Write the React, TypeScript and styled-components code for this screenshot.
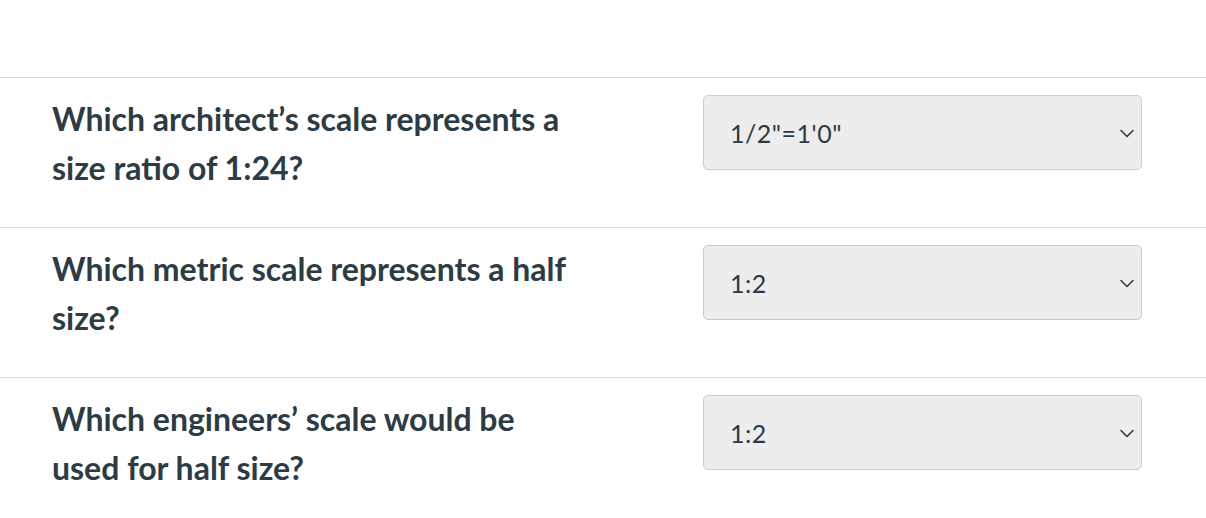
import React from 'react'
import styled, { createGlobalStyle } from 'styled-components'

const GlobalStyle = createGlobalStyle`
  html, body {
    margin: 0;
    padding: 0;
    background: #ffffff;
  }
  body {
    font-family: Lato, "Liberation Sans", sans-serif;
    color: #2d3b45;
  }
`

const Page = styled.div`
  width: 1206px;
  padding-top: 77px;
`

const Row = styled.div`
  display: grid;
  grid-template-columns: 1fr 439px;
  align-items: start;
  height: 150px;
  box-sizing: border-box;
  border-top: 1px solid #d9d9d9;
  padding: 0 64px 0 52px;
`

const Question = styled.div`
  max-width: 522px;
  margin-top: 16px;
  font-size: 32px;
  font-weight: 700;
  line-height: 49px;
`

const SelectWrap = styled.div`
  position: relative;
  margin-top: 17px;
`

const Select = styled.select`
  appearance: none;
  -webkit-appearance: none;
  width: 100%;
  height: 75px;
  box-sizing: border-box;
  padding: 0 50px 0 26px;
  border: 1.5px solid #c7cdd1;
  border-radius: 5px;
  background: #ededed;
  color: #2d3b45;
  font-family: Lato, "Liberation Sans", sans-serif;
  font-size: 25px;
  letter-spacing: 0.5px;
  outline: none;
`

const Chevron = styled.svg`
  position: absolute;
  right: 6px;
  top: 50%;
  transform: translateY(-50%);
  width: 18px;
  height: 18px;
  pointer-events: none;
`

interface QuestionItem {
  text: string
  options: string[]
  answer: string
}

const questions: QuestionItem[] = [
  {
    text: 'Which architect’s scale represents a size ratio of 1:24?',
    options: ['1/2"=1\'0"', '1"=1\'0"', '1/4"=1\'0"'],
    answer: '1/2"=1\'0"'
  },
  {
    text: 'Which metric scale represents a half size?',
    options: ['1:2', '1:5', '1:10'],
    answer: '1:2'
  },
  {
    text: 'Which engineers’ scale would be used for half size?',
    options: ['1:2', '1:20', '1:50'],
    answer: '1:2'
  }
]

const App = () => {
  return (
    <>
      <GlobalStyle />
      <Page>
        {questions.map((q, i) => (
          <Row key={i}>
            <Question>{q.text}</Question>
            <SelectWrap>
              <Select defaultValue={q.answer}>
                {q.options.map((o) => (
                  <option key={o} value={o}>{o}</option>
                ))}
              </Select>
              <Chevron viewBox="0 0 18 18" fill="none">
                <path d="M3 6.5l6 6 6-6" stroke="#2d3b45" strokeWidth="1.6" strokeLinecap="round" strokeLinejoin="round" />
              </Chevron>
            </SelectWrap>
          </Row>
        ))}
      </Page>
    </>
  )
}

export default App
